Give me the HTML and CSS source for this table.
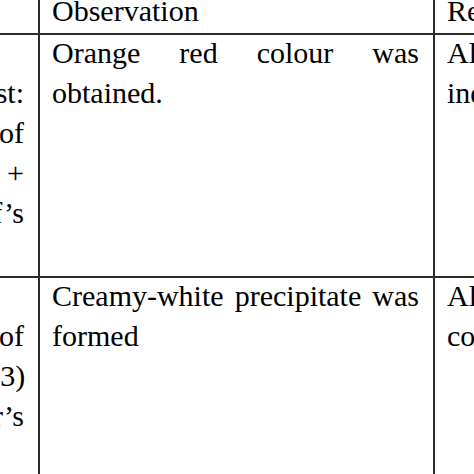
FILE: index.html
```html
<!DOCTYPE html>
<html lang="en">
<head>
<meta charset="utf-8">
<title>Observation table</title>
<link rel="stylesheet" href="styles.css">
</head>
<body>
<div class="wrap">
<table class="tbl">
  <thead>
    <tr>
      <th class="c1">Test</th>
      <th class="c2">Observation</th>
      <th class="c3">Result</th>
    </tr>
  </thead>
  <tbody>
    <tr>
      <td class="c1"><div class="txt side">&nbsp;<br>2,4-DNP test:<br>2 mL extract of<br>2,4-DNP reagent +<br>Schiff’s<br>&nbsp;</div></td>
      <td class="c2"><div class="txt">Orange red colour was obtained.</div></td>
      <td class="c3"><div class="txt">Aldehyde<br>indicated</div></td>
    </tr>
    <tr>
      <td class="c1"><div class="txt side">&nbsp;<br>2 mL extract of<br>silver nitrate (AgNO3)<br>Baeyer’s<br>&nbsp;</div></td>
      <td class="c2"><div class="txt">Creamy-white precipitate was formed</div></td>
      <td class="c3"><div class="txt">Alkyl halide<br>confirmed</div></td>
    </tr>
  </tbody>
</table>
</div>
</body>
</html>
```
FILE: styles.css
```css
html, body {
  margin: 0;
  padding: 0;
  background: #ffffff;
}
body {
  width: 474px;
  height: 474px;
  overflow: hidden;
}
.wrap {
  margin-left: -260px;
  margin-top: -9px;
}
.tbl {
  border-collapse: separate;
  border-spacing: 0;
  table-layout: fixed;
  width: 895px;
  font-family: "Liberation Serif", "Times New Roman", serif;
  font-size: 30px;
  line-height: 40px;
  color: #000000;
}
.tbl th,
.tbl td {
  box-sizing: border-box;
  border-right: 2px solid #2b2b2b;
  border-bottom: 2px solid #2b2b2b;
  vertical-align: top;
  text-align: left;
  font-weight: normal;
  white-space: normal;
}
.tbl th {
  padding: 0 14px 2px 12px;
}
.tbl td {
  padding: 0 14px 3px 12px;
}
.c1 { width: 300px; }
.c2 { width: 395px; }
.c3 { width: 200px; }
.txt {
  margin-top: -2px;
}
.c2 .txt {
  text-align: justify;
}
.side {
  text-align: right;
  white-space: nowrap;
}
.c3 .txt {
  white-space: nowrap;
}
```
